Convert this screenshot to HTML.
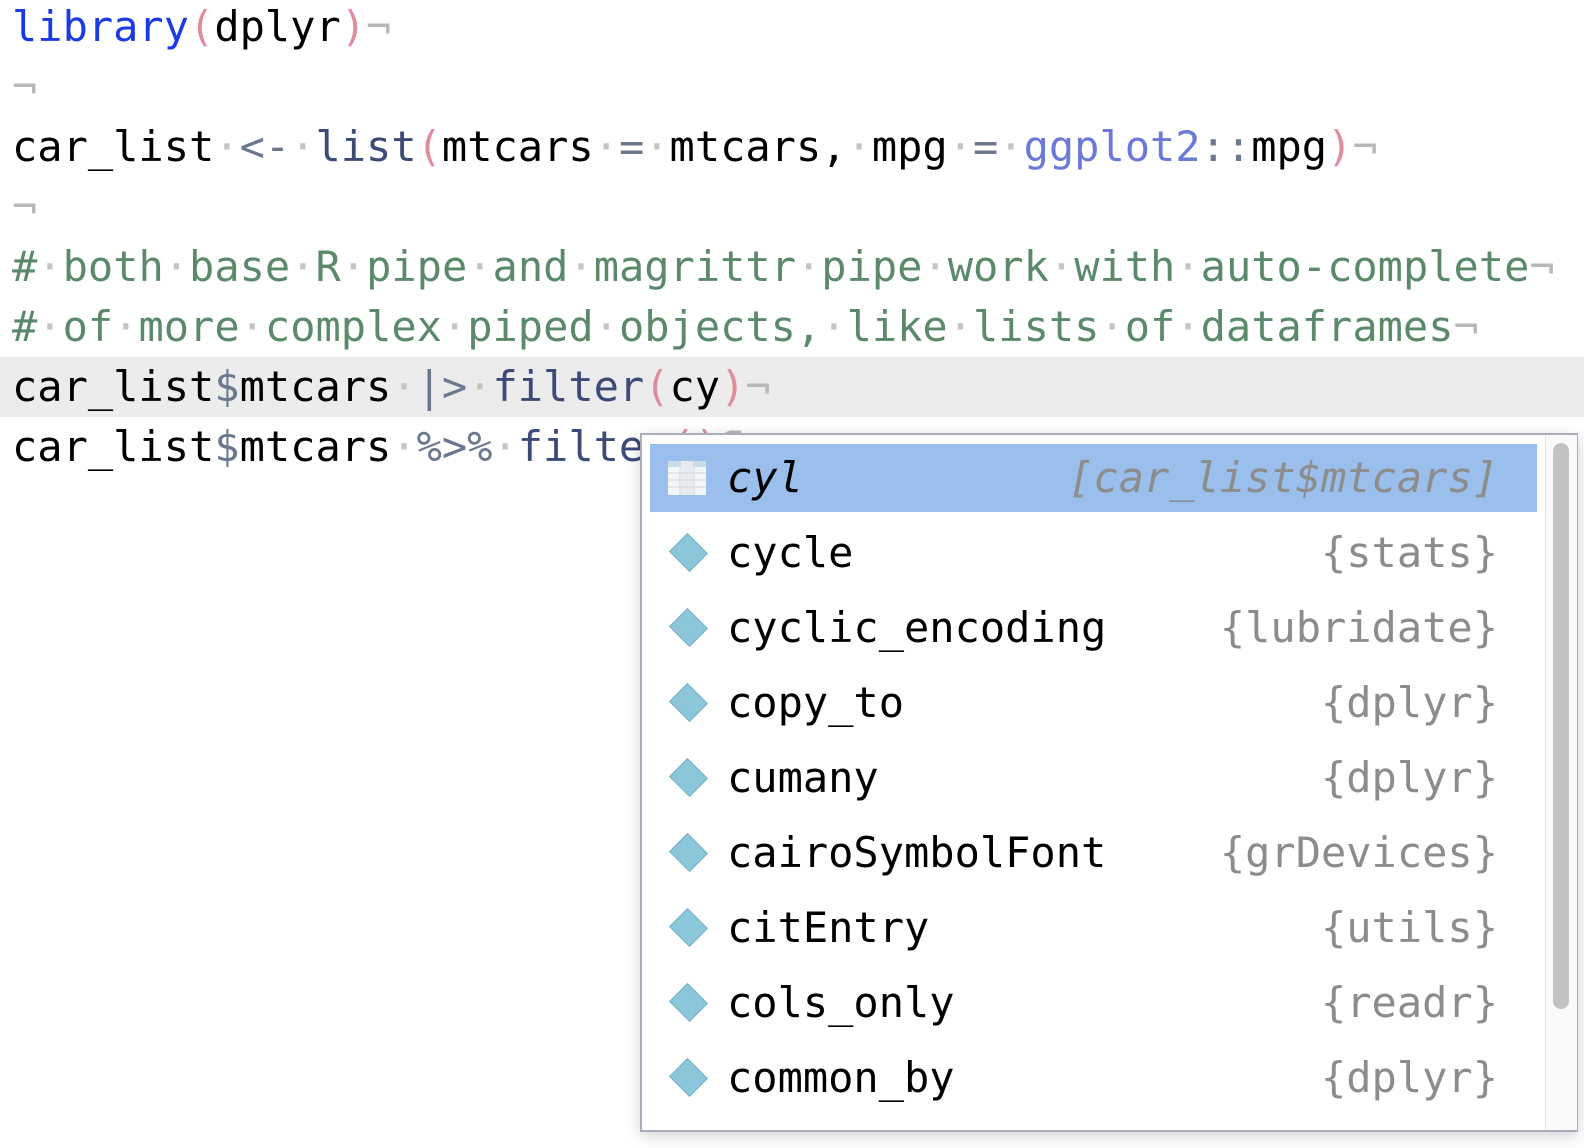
<!DOCTYPE html>
<html><head><meta charset="utf-8"><style>
body{margin:0;width:1584px;height:1148px;background:#fff;overflow:hidden;position:relative;font-family:"DejaVu Sans Mono","Liberation Mono",monospace;}
.code{position:absolute;left:12px;top:-3px;font-size:42px;line-height:60px;white-space:pre;color:#000}
.hl{position:absolute;left:0;top:357px;width:1584px;height:60px;background:#ececec}
.d{color:#c4c4c4}.n{color:#b8b8b8}.kw{color:#1a3ae8}.p{color:#e08c9c}.c{color:#5b8a6b}.f{color:#3c4a78}.o{color:#6b7890}.g{color:#6b7ad8}
.pop{position:absolute;left:640px;top:433px;width:934px;height:695px;border:2px solid #a9aebb;background:#fff;box-shadow:0 4px 14px rgba(0,0,0,.18)}
.row{position:absolute;left:8px;width:887px;height:68px;font-size:42px;line-height:68px}
.row .nm{position:absolute;left:77px;color:#000}
.row .pk{position:absolute;right:39px;color:#8c8c8c}
.sel{background:#9abfec}
.dia{position:absolute;left:24px;top:19px;width:27px;height:27px;background:#8cc6da;border:1px solid #6fb0c8;transform:rotate(45deg) scaleY(.9)}
.sb{position:absolute;left:903px;top:0;width:31px;height:695px;border-left:1px solid #e4e4e4;background:#fafafa}
.th{position:absolute;left:7px;top:8px;width:16px;height:566px;background:#c2c2c2;border-radius:8px}
</style></head><body>
<div class="hl"></div>
<div class="code"><span class="kw">library</span><span class="p">(</span>dplyr<span class="p">)</span><span class="n">¬</span>
<span class="n">¬</span>
car_list<span class="d">·</span><span class="o">&lt;-</span><span class="d">·</span><span class="f">list</span><span class="p">(</span>mtcars<span class="d">·</span><span class="o">=</span><span class="d">·</span>mtcars,<span class="d">·</span>mpg<span class="d">·</span><span class="o">=</span><span class="d">·</span><span class="g">ggplot2</span><span class="o">::</span>mpg<span class="p">)</span><span class="n">¬</span>
<span class="n">¬</span>
<span class="c">#<span class="d">·</span>both<span class="d">·</span>base<span class="d">·</span>R<span class="d">·</span>pipe<span class="d">·</span>and<span class="d">·</span>magrittr<span class="d">·</span>pipe<span class="d">·</span>work<span class="d">·</span>with<span class="d">·</span>auto-complete</span><span class="n">¬</span>
<span class="c">#<span class="d">·</span>of<span class="d">·</span>more<span class="d">·</span>complex<span class="d">·</span>piped<span class="d">·</span>objects,<span class="d">·</span>like<span class="d">·</span>lists<span class="d">·</span>of<span class="d">·</span>dataframes</span><span class="n">¬</span>
car_list<span class="o">$</span>mtcars<span class="d">·</span><span class="o">|&gt;</span><span class="d">·</span><span class="f">filter</span><span class="p">(</span>cy<span class="p">)</span><span class="n">¬</span>
car_list<span class="o">$</span>mtcars<span class="d">·</span><span class="o">%&gt;%</span><span class="d">·</span><span class="f">filter</span><span class="p">()</span><span class="n">¶</span></div>
<div class="pop">
<div class="row sel" style="top:9px"><svg style="position:absolute;left:18px;top:17px" width="38" height="34"><rect x="0" y="0" width="38" height="34" fill="#f4f6f8"/><rect x="0" y="0" width="38" height="6" fill="#c9dcea"/><rect x="13" y="0" width="12" height="34" fill="#e8ecf0"/><g stroke="#d4d8dc" stroke-width="1"><line x1="0" y1="12" x2="38" y2="12"/><line x1="0" y1="19" x2="38" y2="19"/><line x1="0" y1="26" x2="38" y2="26"/><line x1="12" y1="0" x2="12" y2="34"/><line x1="26" y1="0" x2="26" y2="34"/></g></svg><span class="nm" style="font-style:italic">cyl</span><span class="pk" style="font-style:italic">[car_list$mtcars]</span></div>
<div class="row" style="top:84px"><div class="dia"></div><span class="nm">cycle</span><span class="pk">{stats}</span></div>
<div class="row" style="top:159px"><div class="dia"></div><span class="nm">cyclic_encoding</span><span class="pk">{lubridate}</span></div>
<div class="row" style="top:234px"><div class="dia"></div><span class="nm">copy_to</span><span class="pk">{dplyr}</span></div>
<div class="row" style="top:309px"><div class="dia"></div><span class="nm">cumany</span><span class="pk">{dplyr}</span></div>
<div class="row" style="top:384px"><div class="dia"></div><span class="nm">cairoSymbolFont</span><span class="pk">{grDevices}</span></div>
<div class="row" style="top:459px"><div class="dia"></div><span class="nm">citEntry</span><span class="pk">{utils}</span></div>
<div class="row" style="top:534px"><div class="dia"></div><span class="nm">cols_only</span><span class="pk">{readr}</span></div>
<div class="row" style="top:609px"><div class="dia"></div><span class="nm">common_by</span><span class="pk">{dplyr}</span></div>
<div class="sb"><div class="th"></div></div>
</div>
</body></html>
